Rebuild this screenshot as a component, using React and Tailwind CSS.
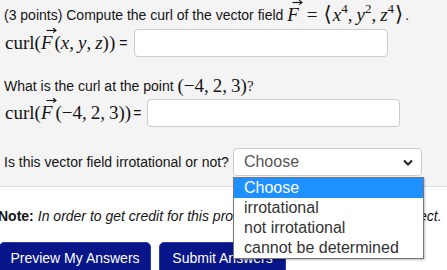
import React from 'react';

const mathFont = "font-['Liberation_Serif','DejaVu_Serif',serif]";

function VecF() {
  return (
    <span className="relative inline-block italic pr-[2px]">
      F
      <svg className="absolute top-[-2px] left-[5px] w-[11px] h-[6px]" viewBox="0 0 11 6" fill="none" stroke="#111" strokeWidth="1.1">
        <path d="M0.5 3.5 H9.5" />
        <path d="M7.2 1.2 L10 3.5 L7.2 5.6" />
      </svg>
    </span>
  );
}

function Input({ width }) {
  return <div className={`h-[28px] ${width} bg-white border border-[#ccc] rounded-[4px]`} />;
}

export default function App() {
  return (
    <div className="w-[447px] h-[270px] overflow-hidden relative bg-white font-['Liberation_Sans',Arial,sans-serif] text-[14px] text-[#151515]">
      <div className="h-[187px] bg-[#f4f4f4] border-b border-[#dedede] pt-[4px] pl-[4px]">
        {/* Frage 1 */}
        <div className="h-[22px] flex items-center whitespace-nowrap">
          <span>(3 points) Compute the curl of the vector field&nbsp;</span>
          <span className={`${mathFont} text-[19px] flex items-center`}>
            <VecF />
            <span className="mx-[6px]">=</span>
            <span className="mr-[1px] text-[21px]">⟨</span>
            <span className="italic">x</span><sup className="text-[13px] -top-[6px]">4</sup>
            <span className="mr-[4px]">,</span>
            <span className="italic">y</span><sup className="text-[13px] -top-[6px]">2</sup>
            <span className="mr-[4px]">,</span>
            <span className="italic">z</span><sup className="text-[13px] -top-[6px]">4</sup>
            <span className="ml-[1px] text-[21px]">⟩</span>
          </span>
          <span className="ml-[2px]">.</span>
        </div>
        <div className="mt-[3px] h-[28px] flex items-center whitespace-nowrap">
          <span className={`${mathFont} text-[19px] ml-[1px]`}>
            curl(<VecF />(<span className="italic">x</span>,<span className="ml-[4px] italic">y</span>,<span className="ml-[4px] italic">z</span>))
          </span>
          <span className="ml-[4px]">=</span>
          <div className="ml-[7px]">
            <Input width="w-[254px]" />
          </div>
        </div>

        {/* Frage 2 */}
        <div className="mt-[19px] h-[20px] flex items-center whitespace-nowrap">
          <span>What is the curl at the point&nbsp;</span>
          <span className={`${mathFont} text-[19px]`}>
            (−4,<span className="ml-[4px]">2</span>,<span className="ml-[4px]">3</span>)
          </span>
          <span className={`${mathFont} text-[15px]`}>?</span>
        </div>
        <div className="mt-[3px] h-[28px] flex items-center whitespace-nowrap">
          <span className={`${mathFont} text-[19px] ml-[1px]`}>
            curl(<VecF /><span className="ml-[1px]">(−4,</span><span className="ml-[4px]">2</span>,<span className="ml-[4px]">3</span>))
          </span>
          <span className="ml-[2px]">=</span>
          <div className="ml-[6px]">
            <Input width="w-[253px]" />
          </div>
        </div>

        {/* Frage 3 */}
        <div className="mt-[21px] h-[28px] flex items-center whitespace-nowrap">
          <span>Is this vector field irrotational or not?</span>
          <div className="ml-[4px] w-[189px] h-[28px] bg-white border border-[#ccc] rounded-[4px] flex items-center justify-between pl-[10px] pr-[8px] text-[16px] text-[#555]">
            <span>Choose</span>
            <svg className="w-[10px] h-[7px]" viewBox="0 0 10 7" fill="none" stroke="#222" strokeWidth="2">
              <path d="M1 1.5 L5 5.5 L9 1.5" />
            </svg>
          </div>
        </div>
      </div>

      <div className="mt-[19px] h-[20px] flex items-center whitespace-nowrap -ml-[2px]">
        <span className="font-bold">Note:</span>
        <span className="italic ml-[4px]">In order to get credit for this problem all answers must be correct.</span>
      </div>

      <div className="mt-[16px] flex gap-[8px]">
        <button className="h-[32px] w-[152px] bg-[#08168a] border border-[#2a3aa6] rounded-[5px] text-white text-[14px] -ml-[1px]">
          Preview My Answers
        </button>
        <button className="h-[32px] w-[127px] bg-[#08168a] border border-[#2a3aa6] rounded-[5px] text-white text-[14px]">
          Submit Answers
        </button>
      </div>

      {/* aufgeklappte Auswahlliste */}
      <div className="absolute left-[233px] top-[177px] w-[191px] bg-white border border-[#767676] shadow-[1px_1px_2px_rgba(0,0,0,0.25)] text-[16px] text-[#333]">
        <div className="h-[20px] flex items-center pl-[10px] bg-[#1e90ff] text-white">Choose</div>
        <div className="h-[20px] flex items-center pl-[10px]">irrotational</div>
        <div className="h-[20px] flex items-center pl-[10px]">not irrotational</div>
        <div className="h-[20px] flex items-center pl-[10px]">cannot be determined</div>
      </div>
    </div>
  );
}
